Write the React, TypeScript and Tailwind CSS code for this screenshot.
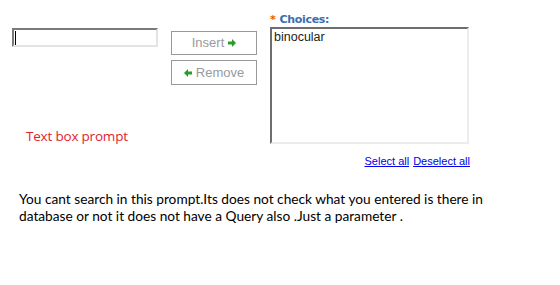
import React from 'react';

const Arrow = ({ dir }: { dir: 'left' | 'right' }) => (
  <svg width="8" height="8" viewBox="0 0 8 8" className="inline-block">
    {dir === 'right' ? (
      <path d="M0 2.5h4V0l4 4-4 4V5.5H0z" fill="#2e9a2e" />
    ) : (
      <path d="M8 2.5H4V0L0 4l4 4V5.5h4z" fill="#2e9a2e" />
    )}
  </svg>
);

const App: React.FC = () => {
  return (
    <div className="w-[560px] h-[285px] bg-white font-['Liberation_Sans',Arial,sans-serif]">
      <div className="flex">
        {/* text box + caption */}
        <div className="ml-[12px] mt-[28px] w-[146px]">
          <div className="h-[19px] border-2 border-t-[#7a7a7a] border-l-[#7a7a7a] border-r-[#e4e4e4] border-b-[#e4e4e4] bg-white flex items-center">
            <div className="ml-[1px] w-[1px] h-[14px] bg-black" />
          </div>
          <p className="mt-[79px] ml-[14px] text-[13.5px] text-[#e0242e] font-['Open_Sans',sans-serif] tracking-[-0.2px]">
            Text box prompt
          </p>
        </div>

        {/* insert / remove */}
        <div className="ml-[13px] mt-[31px] flex flex-col gap-[5px]">
          <button className="w-[86px] h-[24px] border border-[#999] bg-white text-[13px] text-[#9a9a9a] flex items-center justify-center gap-[4px]">
            Insert <Arrow dir="right" />
          </button>
          <button className="w-[86px] h-[25px] border border-[#999] bg-white text-[13px] text-[#9a9a9a] flex items-center justify-center gap-[4px]">
            <Arrow dir="left" /> Remove
          </button>
        </div>

        {/* choices list */}
        <div className="ml-[13px] mt-[13px]">
          <div className="h-[14px] flex items-center text-[11px] font-bold text-[#3a6db0] font-['DejaVu_Sans',sans-serif] tracking-[-0.3px]">
            <span className="text-[#ec5a00] mr-[4px]">*</span>Choices:
          </div>
          <div className="w-[199px] h-[117px] border-2 border-t-[#6e6e6e] border-l-[#6e6e6e] border-r-[#ececec] border-b-[#ececec] bg-white px-[2px]">
            <div className="mt-[1px] text-[12.5px] leading-[15px] text-[#222]">binocular</div>
          </div>
          <div className="mt-[9px] flex justify-end gap-[4px] text-[11px] text-[#0000ee] mr-[-1px]">
            <a className="underline cursor-pointer">Select all</a>
            <a className="underline cursor-pointer">Deselect all</a>
          </div>
        </div>
      </div>

      <p className="mt-[20px] ml-[19px] w-[520px] text-[13.7px] leading-[17px] text-black font-['Lato',sans-serif]">
        You cant search in this prompt.Its does not check what you entered is there in database or not it does not have a Query also .Just a parameter .
      </p>
    </div>
  );
};

export default App;
